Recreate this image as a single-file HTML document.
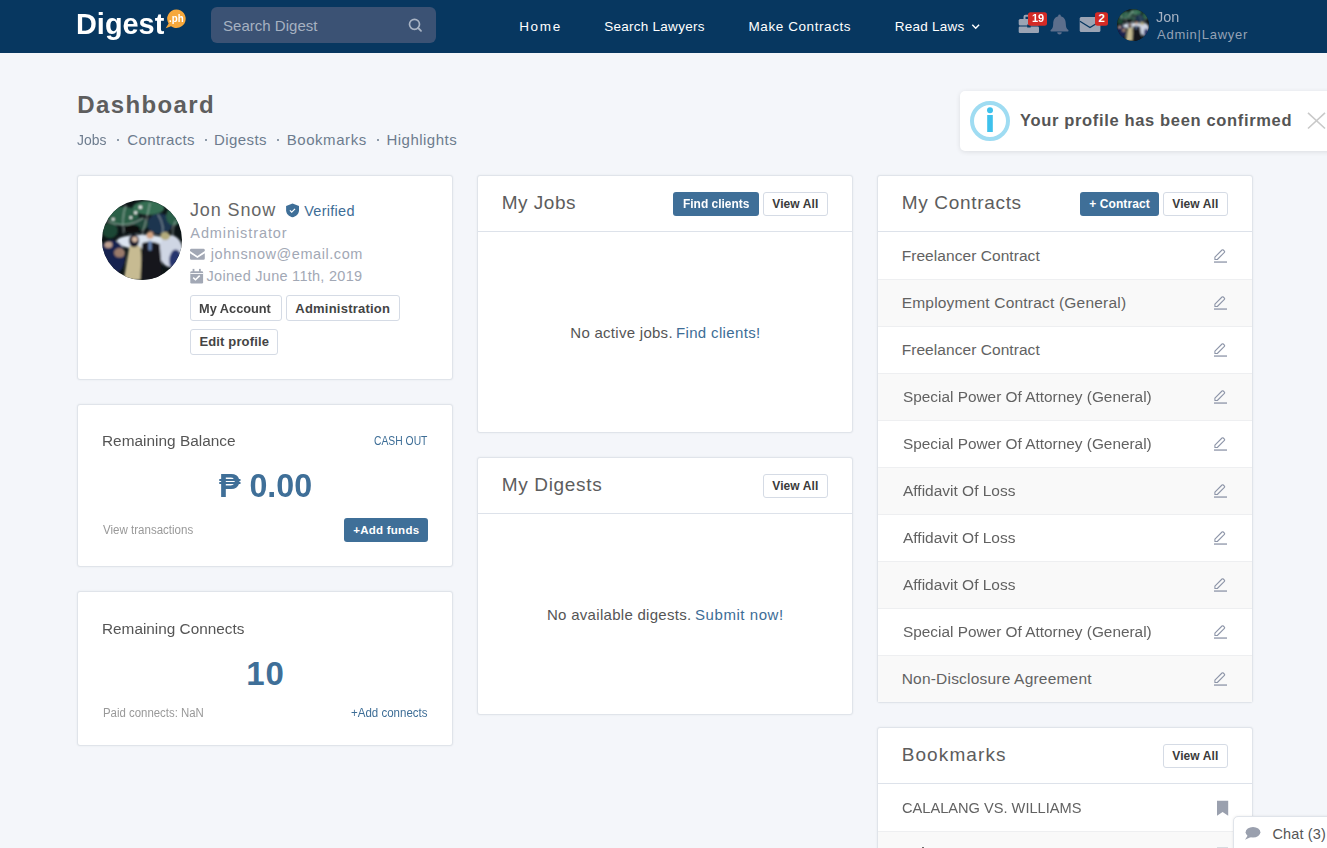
<!DOCTYPE html>
<html><head><meta charset="utf-8">
<style>
*{box-sizing:border-box;margin:0;padding:0}
html,body{width:1327px;height:848px;overflow:hidden}
body{background:#f4f6fa;font-family:"Liberation Sans",sans-serif;position:relative}
.b{position:absolute}
.t{position:absolute;white-space:nowrap}
</style></head><body>
<div class="b" style="left:0px;top:0px;width:1327px;height:53px;background:#073760"></div>
<div class="t" style="left:76.40px;top:8.00px;font-size:29px;line-height:32px;color:#fff;font-weight:bold;transform:scaleX(0.9958);transform-origin:0 0">Digest</div>
<svg class="b" style="left:160px;top:7px" width="30" height="26" viewBox="160 7 30 26"><path d="M176.4 9.6a9.2 9.2 0 1 1 -5.4 16.6 L165.7 28.2 L168.6 23.6 A9.2 9.2 0 0 1 176.4 9.6z" fill="#f6a83c"/></svg>
<div class="t" style="left:168.50px;top:12.60px;font-size:10px;line-height:11px;color:#fff;font-weight:bold;transform:scaleX(0.9740);transform-origin:0 0">.ph</div>
<div class="b" style="left:211px;top:7px;width:225px;height:36px;background:#3b5274;border-radius:6px"></div>
<div class="t" style="left:223.00px;top:17.00px;font-size:15px;line-height:17px;color:#a6b1c1;letter-spacing:0.021px">Search Digest</div>
<svg class="b" style="left:405px;top:15px" width="20" height="20" viewBox="405 15 20 20"><circle cx="414.5" cy="24.3" r="5" fill="none" stroke="#a9b4c4" stroke-width="1.7"/><path d="M418.2 28 L421 30.8" stroke="#a9b4c4" stroke-width="1.8" stroke-linecap="round"/></svg>
<div class="t" style="left:519.20px;top:19.00px;font-size:13.5px;line-height:15px;color:#fff;letter-spacing:1.666px">Home</div>
<div class="t" style="left:604.20px;top:19.00px;font-size:13.5px;line-height:15px;color:#fff;letter-spacing:0.266px">Search Lawyers</div>
<div class="t" style="left:748.50px;top:19.00px;font-size:13.5px;line-height:15px;color:#fff;letter-spacing:0.578px">Make Contracts</div>
<div class="t" style="left:894.80px;top:19.00px;font-size:13.5px;line-height:15px;color:#fff;letter-spacing:0.239px">Read Laws</div>
<svg class="b" style="left:968px;top:20px" width="16" height="14" viewBox="968 20 16 14"><path d="M972.3 24.8 L975.7 28.2 L979.1 24.8" fill="none" stroke="#fff" stroke-width="1.5"/></svg>
<svg class="b" style="left:1015px;top:10px" width="100" height="30" viewBox="1015 10 100 30"><path d="M1024.5 19 v-2.2 a1 1 0 0 1 1 -1 h6.5 a1 1 0 0 1 1 1 v2.2" fill="none" stroke="#9ba4b4" stroke-width="2"/><rect x="1018.7" y="19" width="20.3" height="6.5" rx="1.5" fill="#9ba4b4"/><rect x="1018.7" y="26.5" width="20.3" height="6.4" rx="1.2" fill="#9ba4b4"/><rect x="1027.2" y="24.5" width="3.5" height="3" fill="#073760"/><path d="M1059.5 14.4 a1.3 1.3 0 0 1 1.3 1.3 v0.5 c3.5 0.8 5 3.8 5 7.5 c0 3.5 0.9 5 2.3 6.1 a1 1 0 0 1 -0.6 1.8 h-16 a1 1 0 0 1 -0.6 -1.8 c1.4 -1.1 2.3 -2.6 2.3 -6.1 c0 -3.7 1.5 -6.7 5 -7.5 v-0.5 a1.3 1.3 0 0 1 1.3 -1.3z M1057.2 32.2 h4.6 a2.3 2.3 0 0 1 -4.6 0z" fill="#5d6f8c"/><rect x="1079.7" y="17" width="20.7" height="15" rx="1.5" fill="#9ba4b4"/><path d="M1079.9 21.2 L1090 27.6 L1100.2 21.2" fill="none" stroke="#073760" stroke-width="1.3"/><rect x="1028" y="12.2" width="19" height="13.5" rx="2.5" fill="#d42a25"/><rect x="1095" y="12.2" width="13" height="13.5" rx="2.5" fill="#d42a25"/></svg>
<div class="t" style="left:1031.50px;top:12.40px;font-size:11.5px;line-height:12px;color:#fff;font-weight:bold;transform:scaleX(0.9519);transform-origin:0 0">19</div>
<div class="t" style="left:1098.50px;top:12.40px;font-size:11.5px;line-height:12px;color:#fff;font-weight:bold">2</div>
<svg class="b" style="left:1117px;top:9.2px" width="32" height="32" viewBox="0 0 100 100"><defs><clipPath id="ca"><circle cx="50" cy="50" r="50"/></clipPath><filter id="fa" x="-10%" y="-10%" width="120%" height="120%"><feGaussianBlur stdDeviation="2.6"/></filter></defs><g clip-path="url(#ca)"><rect width="100" height="100" fill="#0c1416"/><g filter="url(#fa)"><ellipse cx="26" cy="20" rx="20" ry="12" fill="#2b5f47"/><ellipse cx="58" cy="10" rx="20" ry="9" fill="#356e52"/><ellipse cx="10" cy="38" rx="10" ry="10" fill="#1f4636"/><ellipse cx="72" cy="30" rx="16" ry="13" fill="#1d3450"/><ellipse cx="90" cy="20" rx="10" ry="12" fill="#2a5e48"/><ellipse cx="48" cy="30" rx="10" ry="8" fill="#244a3c"/><ellipse cx="38" cy="36" rx="10" ry="5" fill="#0a1010"/><path d="M6 26 Q30 38 52 22 M30 6 Q24 24 27 42 M60 4 Q55 28 50 44 M70 18 Q80 34 74 48 M92 26 Q86 40 90 52" stroke="#c5d2cc" stroke-width="1.6" fill="none" opacity=".55"/><ellipse cx="50" cy="52" rx="32" ry="9" fill="#dbe4f0"/><ellipse cx="12" cy="72" rx="17" ry="22" fill="#152250"/><ellipse cx="8" cy="56" rx="5" ry="4" fill="#c0a090"/><ellipse cx="22" cy="66" rx="7" ry="6" fill="#9a7a6a"/><ellipse cx="86" cy="64" rx="15" ry="20" fill="#cfd6e4"/><ellipse cx="92" cy="76" rx="8" ry="14" fill="#26366e"/><ellipse cx="79" cy="45" rx="6" ry="5" fill="#b3ab7c"/><path d="M34 58 Q41 55 48 58 L53 100 H27z" fill="#c7bb92"/><ellipse cx="40" cy="51" rx="6.5" ry="8" fill="#18182a"/><circle cx="41" cy="49" r="3.5" fill="#d6b8a2"/><path d="M50 54 Q61 50 72 55 L76 100 H48z" fill="#15161a"/><circle cx="60" cy="44" r="4.5" fill="#cfa080"/><rect x="58" y="51" width="4" height="12" fill="#6a88b8"/><circle cx="48" cy="9" r="2" fill="#fff"/><circle cx="42" cy="16" r="1.8" fill="#fff"/><circle cx="36" cy="22" r="1.6" fill="#fff"/><circle cx="14" cy="24" r="1.6" fill="#fff"/></g></g></svg>
<div class="t" style="left:1156.30px;top:8.20px;font-size:15px;line-height:17px;color:#a9b4c4;transform:scaleX(0.9605);transform-origin:0 0">Jon</div>
<div class="t" style="left:1157.00px;top:27.00px;font-size:13px;line-height:15px;color:#95a2b5;letter-spacing:0.745px">Admin|Lawyer</div>
<div class="t" style="left:77.30px;top:90.90px;font-size:24px;line-height:27px;color:#5e5e5e;font-weight:bold;letter-spacing:1.376px">Dashboard</div>
<div class="t" style="left:77.10px;top:131.30px;font-size:15px;line-height:17px;color:#6d7c8e;transform:scaleX(0.9267);transform-origin:0 0">Jobs</div>
<div class="t" style="left:127.30px;top:131.30px;font-size:15px;line-height:17px;color:#6d7c8e;letter-spacing:0.389px">Contracts</div>
<div class="t" style="left:214.10px;top:131.30px;font-size:15px;line-height:17px;color:#6d7c8e;letter-spacing:0.397px">Digests</div>
<div class="t" style="left:286.70px;top:131.30px;font-size:15px;line-height:17px;color:#6d7c8e;letter-spacing:0.560px">Bookmarks</div>
<div class="t" style="left:386.40px;top:131.30px;font-size:15px;line-height:17px;color:#6d7c8e;letter-spacing:0.493px">Highlights</div>
<div class="b" style="left:116.8px;top:139px;width:2.0px;height:2px;background:#6d7c8e;border-radius:1px"></div>
<div class="b" style="left:205px;top:139px;width:2px;height:2px;background:#6d7c8e;border-radius:1px"></div>
<div class="b" style="left:276.9px;top:139px;width:2.0px;height:2px;background:#6d7c8e;border-radius:1px"></div>
<div class="b" style="left:376.9px;top:139px;width:2.0px;height:2px;background:#6d7c8e;border-radius:1px"></div>
<div class="b" style="left:960px;top:91px;width:380px;height:60px;background:#fff;border-radius:5px;box-shadow:0 1px 5px rgba(0,0,0,0.10)"></div>
<svg class="b" style="left:965px;top:96px" width="50" height="50" viewBox="965 96 50 50"><circle cx="990" cy="121" r="18" fill="none" stroke="#9fdcf2" stroke-width="4"/><circle cx="990" cy="110.2" r="3" fill="#3ec1ec"/><rect x="987.2" y="115" width="5.6" height="17" fill="#3ec1ec"/></svg>
<div class="t" style="left:1020.00px;top:110.70px;font-size:16.5px;line-height:18px;color:#555;font-weight:bold;letter-spacing:0.655px">Your profile has been confirmed</div>
<svg class="b" style="left:1300px;top:105px" width="27" height="30" viewBox="1300 105 27 30"><path d="M1308 112.8 L1325 128.5 M1325 112.8 L1308 128.5" stroke="#c9c9c9" stroke-width="1.6"/></svg>
<div class="b" style="left:77px;top:175px;width:376px;height:205px;background:#fff;border:1px solid #e0e4ea;border-radius:3px;box-shadow:0 0 2px rgba(40,50,70,0.08)"></div>
<svg class="b" style="left:102px;top:200px" width="80" height="80" viewBox="0 0 100 100"><defs><clipPath id="cb"><circle cx="50" cy="50" r="50"/></clipPath><filter id="fb" x="-10%" y="-10%" width="120%" height="120%"><feGaussianBlur stdDeviation="1.3"/></filter></defs><g clip-path="url(#cb)"><rect width="100" height="100" fill="#0c1416"/><g filter="url(#fb)"><ellipse cx="26" cy="20" rx="20" ry="12" fill="#2b5f47"/><ellipse cx="58" cy="10" rx="20" ry="9" fill="#356e52"/><ellipse cx="10" cy="38" rx="10" ry="10" fill="#1f4636"/><ellipse cx="72" cy="30" rx="16" ry="13" fill="#1d3450"/><ellipse cx="90" cy="20" rx="10" ry="12" fill="#2a5e48"/><ellipse cx="48" cy="30" rx="10" ry="8" fill="#244a3c"/><ellipse cx="38" cy="36" rx="10" ry="5" fill="#0a1010"/><path d="M6 26 Q30 38 52 22 M30 6 Q24 24 27 42 M60 4 Q55 28 50 44 M70 18 Q80 34 74 48 M92 26 Q86 40 90 52" stroke="#c5d2cc" stroke-width="1.6" fill="none" opacity=".55"/><ellipse cx="50" cy="52" rx="32" ry="9" fill="#dbe4f0"/><ellipse cx="12" cy="72" rx="17" ry="22" fill="#152250"/><ellipse cx="8" cy="56" rx="5" ry="4" fill="#c0a090"/><ellipse cx="22" cy="66" rx="7" ry="6" fill="#9a7a6a"/><ellipse cx="86" cy="64" rx="15" ry="20" fill="#cfd6e4"/><ellipse cx="92" cy="76" rx="8" ry="14" fill="#26366e"/><ellipse cx="79" cy="45" rx="6" ry="5" fill="#b3ab7c"/><path d="M34 58 Q41 55 48 58 L53 100 H27z" fill="#c7bb92"/><ellipse cx="40" cy="51" rx="6.5" ry="8" fill="#18182a"/><circle cx="41" cy="49" r="3.5" fill="#d6b8a2"/><path d="M50 54 Q61 50 72 55 L76 100 H48z" fill="#15161a"/><circle cx="60" cy="44" r="4.5" fill="#cfa080"/><rect x="58" y="51" width="4" height="12" fill="#6a88b8"/><circle cx="48" cy="9" r="2" fill="#fff"/><circle cx="42" cy="16" r="1.8" fill="#fff"/><circle cx="36" cy="22" r="1.6" fill="#fff"/><circle cx="14" cy="24" r="1.6" fill="#fff"/></g></g></svg>
<div class="t" style="left:189.90px;top:199.60px;font-size:18px;line-height:20px;color:#666;letter-spacing:0.907px">Jon Snow</div>
<svg class="b" style="left:284px;top:201px" width="18" height="19" viewBox="284 201 18 19"><path d="M292.55 203.6 L299 206 v4.2 c0 3.8 -2.9 6.1 -6.45 7.1 c-3.55 -1 -6.45 -3.3 -6.45 -7.1 v-4.2z" fill="#3f6f98"/><path d="M289.9 210.4 l1.8 1.8 l3.3 -3.3" fill="none" stroke="#fff" stroke-width="1.2"/></svg>
<div class="t" style="left:304.20px;top:202.90px;font-size:14.5px;line-height:16px;color:#3d6d96;letter-spacing:0.271px">Verified</div>
<div class="t" style="left:190.30px;top:224.50px;font-size:14.5px;line-height:16px;color:#a2a8b5;letter-spacing:0.910px">Administrator</div>
<svg class="b" style="left:188px;top:246px" width="20" height="40" viewBox="188 246 20 40"><path d="M190 250.2 a1.4 1.4 0 0 1 1.4 -1.4 h12 a1.4 1.4 0 0 1 1.4 1.4 v0.8 l-7.4 5 l-7.4 -5z M190 253.2 l7.4 4.9 l7.4 -4.9 v5.2 a1.4 1.4 0 0 1 -1.4 1.4 h-12 a1.4 1.4 0 0 1 -1.4 -1.4z" fill="#a2a8b5"/><rect x="190.3" y="271.2" width="12.8" height="12.3" rx="1.2" fill="#a2a8b5"/><rect x="192.6" y="268.9" width="1.8" height="3" fill="#a2a8b5"/><rect x="199" y="268.9" width="1.8" height="3" fill="#a2a8b5"/><path d="M193.2 277.6 l2.3 2.2 l4.2 -4.2" fill="none" stroke="#fff" stroke-width="1.5"/><rect x="190.3" y="273" width="12.8" height="0.9" fill="#fff"/></svg>
<div class="t" style="left:210.80px;top:246.40px;font-size:14.5px;line-height:16px;color:#a2a8b5;letter-spacing:0.560px">johnsnow@email.com</div>
<div class="t" style="left:206.60px;top:267.70px;font-size:14.5px;line-height:16px;color:#a2a8b5;letter-spacing:0.275px">Joined June 11th, 2019</div>
<div class="b" style="left:190px;top:295px;width:92px;height:26px;background:#fff;border:1px solid #d5dbe5;border-radius:3px"></div>
<div class="b" style="left:286px;top:295px;width:114px;height:26px;background:#fff;border:1px solid #d5dbe5;border-radius:3px"></div>
<div class="b" style="left:190px;top:329px;width:88px;height:26px;background:#fff;border:1px solid #d5dbe5;border-radius:3px"></div>
<div class="t" style="left:199.40px;top:300.50px;font-size:13px;line-height:15px;color:#444;font-weight:bold;transform:scaleX(0.9820);transform-origin:0 0">My Account</div>
<div class="t" style="left:295.30px;top:300.50px;font-size:13px;line-height:15px;color:#444;font-weight:bold;letter-spacing:0.224px">Administration</div>
<div class="t" style="left:199.40px;top:333.80px;font-size:13px;line-height:15px;color:#444;font-weight:bold;letter-spacing:0.149px">Edit profile</div>
<div class="b" style="left:77px;top:404px;width:376px;height:163px;background:#fff;border:1px solid #e0e4ea;border-radius:3px;box-shadow:0 0 2px rgba(40,50,70,0.08)"></div>
<div class="t" style="left:101.71px;top:432.40px;font-size:15.5px;line-height:17px;color:#555;transform:scaleX(0.9933);transform-origin:0 0">Remaining Balance</div>
<div class="t" style="left:373.60px;top:433.50px;font-size:12px;line-height:14px;color:#3d6d96;transform:scaleX(0.8616);transform-origin:0 0">CASH OUT</div>
<div class="t" style="left:218.50px;top:467.30px;font-size:33px;line-height:37px;color:#3f6f98;font-weight:bold;transform:scaleX(0.9760);transform-origin:0 0">₱ 0.00</div>
<div class="t" style="left:102.70px;top:523.00px;font-size:12px;line-height:14px;color:#999;transform:scaleX(0.9614);transform-origin:0 0">View transactions</div>
<div class="b" style="left:344px;top:518px;width:84px;height:24px;background:#3f6f98;border-radius:3px"></div>
<div class="t" style="left:353.20px;top:524.00px;font-size:11.5px;line-height:12px;color:#fff;font-weight:bold;letter-spacing:0.259px">+Add funds</div>
<div class="b" style="left:77px;top:591px;width:376px;height:155px;background:#fff;border:1px solid #e0e4ea;border-radius:3px;box-shadow:0 0 2px rgba(40,50,70,0.08)"></div>
<div class="t" style="left:101.71px;top:619.70px;font-size:15.5px;line-height:17px;color:#555;transform:scaleX(0.9893);transform-origin:0 0">Remaining Connects</div>
<div class="t" style="left:246.30px;top:654.60px;font-size:33px;line-height:37px;color:#3f6f98;font-weight:bold;letter-spacing:0.947px">10</div>
<div class="t" style="left:102.70px;top:706.40px;font-size:12px;line-height:14px;color:#999;transform:scaleX(0.9508);transform-origin:0 0">Paid connects: NaN</div>
<div class="t" style="left:351.10px;top:706.40px;font-size:12px;line-height:14px;color:#3d6d96;transform:scaleX(0.9596);transform-origin:0 0">+Add connects</div>
<div class="b" style="left:477px;top:175px;width:376px;height:258px;background:#fff;border:1px solid #e0e4ea;border-radius:3px;box-shadow:0 0 2px rgba(40,50,70,0.08)"></div>
<div class="b" style="left:478px;top:231px;width:374px;height:1px;background:#dde2ea"></div>
<div class="t" style="left:501.70px;top:192.00px;font-size:19px;line-height:21px;color:#5d5d5d;letter-spacing:0.510px">My Jobs</div>
<div class="b" style="left:673px;top:192px;width:86px;height:24px;background:#3f6f98;border-radius:3px"></div>
<div class="t" style="left:682.60px;top:196.90px;font-size:12px;line-height:14px;color:#fff;font-weight:bold;transform:scaleX(0.9955);transform-origin:0 0">Find clients</div>
<div class="b" style="left:763px;top:192px;width:65px;height:24px;background:#fff;border:1px solid #d5dbe5;border-radius:3px"></div>
<div class="t" style="left:772.30px;top:196.90px;font-size:12px;line-height:14px;color:#3a3a3a;font-weight:bold;letter-spacing:0.091px">View All</div>
<div class="t" style="left:570.30px;top:323.70px;font-size:15px;line-height:17px;color:#555;letter-spacing:0.278px">No active jobs.</div>
<div class="t" style="left:676.00px;top:323.70px;font-size:15px;line-height:17px;color:#3d6d96;letter-spacing:0.345px">Find clients!</div>
<div class="b" style="left:477px;top:457px;width:376px;height:258px;background:#fff;border:1px solid #e0e4ea;border-radius:3px;box-shadow:0 0 2px rgba(40,50,70,0.08)"></div>
<div class="b" style="left:478px;top:513px;width:374px;height:1px;background:#dde2ea"></div>
<div class="t" style="left:501.70px;top:474.00px;font-size:19px;line-height:21px;color:#5d5d5d;letter-spacing:0.671px">My Digests</div>
<div class="b" style="left:763px;top:474px;width:65px;height:24px;background:#fff;border:1px solid #d5dbe5;border-radius:3px"></div>
<div class="t" style="left:772.30px;top:478.90px;font-size:12px;line-height:14px;color:#3a3a3a;font-weight:bold;letter-spacing:0.091px">View All</div>
<div class="t" style="left:547.00px;top:606.30px;font-size:15px;line-height:17px;color:#555;letter-spacing:0.288px">No available digests.</div>
<div class="t" style="left:695.00px;top:606.30px;font-size:15px;line-height:17px;color:#3d6d96;letter-spacing:0.563px">Submit now!</div>
<div class="b" style="left:877px;top:175px;width:376px;height:528px;background:#fff;border:1px solid #e0e4ea;border-radius:3px;box-shadow:0 0 2px rgba(40,50,70,0.08)"></div>
<div class="b" style="left:878px;top:231px;width:374px;height:1px;background:#dde2ea"></div>
<div class="t" style="left:901.70px;top:192.00px;font-size:19px;line-height:21px;color:#5d5d5d;letter-spacing:0.681px">My Contracts</div>
<div class="b" style="left:1080px;top:192px;width:79px;height:24px;background:#3f6f98;border-radius:3px"></div>
<div class="t" style="left:1089.20px;top:196.90px;font-size:12px;line-height:14px;color:#fff;font-weight:bold;letter-spacing:0.102px">+ Contract</div>
<div class="b" style="left:1163px;top:192px;width:65px;height:24px;background:#fff;border:1px solid #d5dbe5;border-radius:3px"></div>
<div class="t" style="left:1172.30px;top:196.90px;font-size:12px;line-height:14px;color:#3a3a3a;font-weight:bold;letter-spacing:0.091px">View All</div>
<div class="t" style="left:901.70px;top:247.20px;font-size:15.5px;line-height:17px;color:#626262;letter-spacing:0.057px">Freelancer Contract</div>
<svg class="b" style="left:1212px;top:247px" width="18" height="18" viewBox="0 0 18 18"><path d="M2.9 12.4 v-2.3 l7.1 -7.1 a0.9 0.9 0 0 1 1.3 0 l1.1 1.1 a0.9 0.9 0 0 1 0 1.3 l-7.1 7.1z" fill="none" stroke="#8d95a8" stroke-width="1.1" stroke-linejoin="round"/><rect x="2" y="14.4" width="13" height="1.3" fill="#8d95a8"/></svg>
<div class="b" style="left:878px;top:279px;width:374px;height:47px;background:#f9f9f9"></div>
<div class="b" style="left:878px;top:279px;width:374px;height:1px;background:#eeeff1"></div>
<div class="t" style="left:901.70px;top:294.20px;font-size:15.5px;line-height:17px;color:#626262;letter-spacing:0.199px">Employment Contract (General)</div>
<svg class="b" style="left:1212px;top:294px" width="18" height="18" viewBox="0 0 18 18"><path d="M2.9 12.4 v-2.3 l7.1 -7.1 a0.9 0.9 0 0 1 1.3 0 l1.1 1.1 a0.9 0.9 0 0 1 0 1.3 l-7.1 7.1z" fill="none" stroke="#8d95a8" stroke-width="1.1" stroke-linejoin="round"/><rect x="2" y="14.4" width="13" height="1.3" fill="#8d95a8"/></svg>
<div class="b" style="left:878px;top:326px;width:374px;height:1px;background:#eeeff1"></div>
<div class="t" style="left:901.70px;top:341.20px;font-size:15.5px;line-height:17px;color:#626262;letter-spacing:0.057px">Freelancer Contract</div>
<svg class="b" style="left:1212px;top:341px" width="18" height="18" viewBox="0 0 18 18"><path d="M2.9 12.4 v-2.3 l7.1 -7.1 a0.9 0.9 0 0 1 1.3 0 l1.1 1.1 a0.9 0.9 0 0 1 0 1.3 l-7.1 7.1z" fill="none" stroke="#8d95a8" stroke-width="1.1" stroke-linejoin="round"/><rect x="2" y="14.4" width="13" height="1.3" fill="#8d95a8"/></svg>
<div class="b" style="left:878px;top:373px;width:374px;height:47px;background:#f9f9f9"></div>
<div class="b" style="left:878px;top:373px;width:374px;height:1px;background:#eeeff1"></div>
<div class="t" style="left:902.70px;top:388.20px;font-size:15.5px;line-height:17px;color:#626262;transform:scaleX(0.9921);transform-origin:0 0">Special Power Of Attorney (General)</div>
<svg class="b" style="left:1212px;top:388px" width="18" height="18" viewBox="0 0 18 18"><path d="M2.9 12.4 v-2.3 l7.1 -7.1 a0.9 0.9 0 0 1 1.3 0 l1.1 1.1 a0.9 0.9 0 0 1 0 1.3 l-7.1 7.1z" fill="none" stroke="#8d95a8" stroke-width="1.1" stroke-linejoin="round"/><rect x="2" y="14.4" width="13" height="1.3" fill="#8d95a8"/></svg>
<div class="b" style="left:878px;top:420px;width:374px;height:1px;background:#eeeff1"></div>
<div class="t" style="left:902.70px;top:435.20px;font-size:15.5px;line-height:17px;color:#626262;transform:scaleX(0.9921);transform-origin:0 0">Special Power Of Attorney (General)</div>
<svg class="b" style="left:1212px;top:435px" width="18" height="18" viewBox="0 0 18 18"><path d="M2.9 12.4 v-2.3 l7.1 -7.1 a0.9 0.9 0 0 1 1.3 0 l1.1 1.1 a0.9 0.9 0 0 1 0 1.3 l-7.1 7.1z" fill="none" stroke="#8d95a8" stroke-width="1.1" stroke-linejoin="round"/><rect x="2" y="14.4" width="13" height="1.3" fill="#8d95a8"/></svg>
<div class="b" style="left:878px;top:467px;width:374px;height:47px;background:#f9f9f9"></div>
<div class="b" style="left:878px;top:467px;width:374px;height:1px;background:#eeeff1"></div>
<div class="t" style="left:902.70px;top:482.20px;font-size:15.5px;line-height:17px;color:#626262;transform:scaleX(0.9989);transform-origin:0 0">Affidavit Of Loss</div>
<svg class="b" style="left:1212px;top:482px" width="18" height="18" viewBox="0 0 18 18"><path d="M2.9 12.4 v-2.3 l7.1 -7.1 a0.9 0.9 0 0 1 1.3 0 l1.1 1.1 a0.9 0.9 0 0 1 0 1.3 l-7.1 7.1z" fill="none" stroke="#8d95a8" stroke-width="1.1" stroke-linejoin="round"/><rect x="2" y="14.4" width="13" height="1.3" fill="#8d95a8"/></svg>
<div class="b" style="left:878px;top:514px;width:374px;height:1px;background:#eeeff1"></div>
<div class="t" style="left:902.70px;top:529.20px;font-size:15.5px;line-height:17px;color:#626262;transform:scaleX(0.9989);transform-origin:0 0">Affidavit Of Loss</div>
<svg class="b" style="left:1212px;top:529px" width="18" height="18" viewBox="0 0 18 18"><path d="M2.9 12.4 v-2.3 l7.1 -7.1 a0.9 0.9 0 0 1 1.3 0 l1.1 1.1 a0.9 0.9 0 0 1 0 1.3 l-7.1 7.1z" fill="none" stroke="#8d95a8" stroke-width="1.1" stroke-linejoin="round"/><rect x="2" y="14.4" width="13" height="1.3" fill="#8d95a8"/></svg>
<div class="b" style="left:878px;top:561px;width:374px;height:47px;background:#f9f9f9"></div>
<div class="b" style="left:878px;top:561px;width:374px;height:1px;background:#eeeff1"></div>
<div class="t" style="left:902.70px;top:576.20px;font-size:15.5px;line-height:17px;color:#626262;transform:scaleX(0.9989);transform-origin:0 0">Affidavit Of Loss</div>
<svg class="b" style="left:1212px;top:576px" width="18" height="18" viewBox="0 0 18 18"><path d="M2.9 12.4 v-2.3 l7.1 -7.1 a0.9 0.9 0 0 1 1.3 0 l1.1 1.1 a0.9 0.9 0 0 1 0 1.3 l-7.1 7.1z" fill="none" stroke="#8d95a8" stroke-width="1.1" stroke-linejoin="round"/><rect x="2" y="14.4" width="13" height="1.3" fill="#8d95a8"/></svg>
<div class="b" style="left:878px;top:608px;width:374px;height:1px;background:#eeeff1"></div>
<div class="t" style="left:902.70px;top:623.20px;font-size:15.5px;line-height:17px;color:#626262;transform:scaleX(0.9921);transform-origin:0 0">Special Power Of Attorney (General)</div>
<svg class="b" style="left:1212px;top:623px" width="18" height="18" viewBox="0 0 18 18"><path d="M2.9 12.4 v-2.3 l7.1 -7.1 a0.9 0.9 0 0 1 1.3 0 l1.1 1.1 a0.9 0.9 0 0 1 0 1.3 l-7.1 7.1z" fill="none" stroke="#8d95a8" stroke-width="1.1" stroke-linejoin="round"/><rect x="2" y="14.4" width="13" height="1.3" fill="#8d95a8"/></svg>
<div class="b" style="left:878px;top:655px;width:374px;height:47px;background:#f9f9f9"></div>
<div class="b" style="left:878px;top:655px;width:374px;height:1px;background:#eeeff1"></div>
<div class="t" style="left:901.70px;top:670.20px;font-size:15.5px;line-height:17px;color:#626262;letter-spacing:0.201px">Non-Disclosure Agreement</div>
<svg class="b" style="left:1212px;top:670px" width="18" height="18" viewBox="0 0 18 18"><path d="M2.9 12.4 v-2.3 l7.1 -7.1 a0.9 0.9 0 0 1 1.3 0 l1.1 1.1 a0.9 0.9 0 0 1 0 1.3 l-7.1 7.1z" fill="none" stroke="#8d95a8" stroke-width="1.1" stroke-linejoin="round"/><rect x="2" y="14.4" width="13" height="1.3" fill="#8d95a8"/></svg>
<div class="b" style="left:877px;top:727px;width:376px;height:273px;background:#fff;border:1px solid #e0e4ea;border-radius:3px;box-shadow:0 0 2px rgba(40,50,70,0.08)"></div>
<div class="b" style="left:878px;top:783px;width:374px;height:1px;background:#dde2ea"></div>
<div class="t" style="left:901.70px;top:744.00px;font-size:19px;line-height:21px;color:#5d5d5d;letter-spacing:1.097px">Bookmarks</div>
<div class="b" style="left:1163px;top:744px;width:65px;height:24px;background:#fff;border:1px solid #d5dbe5;border-radius:3px"></div>
<div class="t" style="left:1172.30px;top:748.90px;font-size:12px;line-height:14px;color:#3a3a3a;font-weight:bold;letter-spacing:0.091px">View All</div>
<div class="t" style="left:902.40px;top:798.70px;font-size:15.5px;line-height:17px;color:#626262;transform:scaleX(0.9425);transform-origin:0 0">CALALANG VS. WILLIAMS</div>
<svg class="b" style="left:1215px;top:799px" width="16" height="18" viewBox="1215 799 16 18"><path d="M1217 800.7 h11.2 v15 l-5.6 -3.6 l-5.6 3.6z" fill="#9aa0ae"/></svg>
<div class="b" style="left:878px;top:831px;width:374px;height:17px;background:#f9f9f9"></div>
<div class="b" style="left:878px;top:831px;width:374px;height:1px;background:#eeeff1"></div>
<div class="b" style="left:922px;top:847px;width:2px;height:1px;background:#6a6a6a"></div>
<div class="b" style="left:1217px;top:847px;width:11px;height:1px;background:#d8dbe0"></div>
<div class="b" style="left:1233px;top:816px;width:107px;height:54px;background:#fff;border:1px solid #e0e4ea;border-radius:5px;box-shadow:0 0 3px rgba(0,0,0,0.08)"></div>
<svg class="b" style="left:1243px;top:825px" width="20" height="17" viewBox="1243 825 20 17"><ellipse cx="1253" cy="832.3" rx="7.4" ry="5.3" fill="#9aa0ae"/><path d="M1248 835 L1245 839.8 L1251.5 836.8z" fill="#9aa0ae"/></svg>
<div class="t" style="left:1272.50px;top:825.70px;font-size:14.5px;line-height:16px;color:#555;letter-spacing:0.136px">Chat (3)</div>
</body></html>
